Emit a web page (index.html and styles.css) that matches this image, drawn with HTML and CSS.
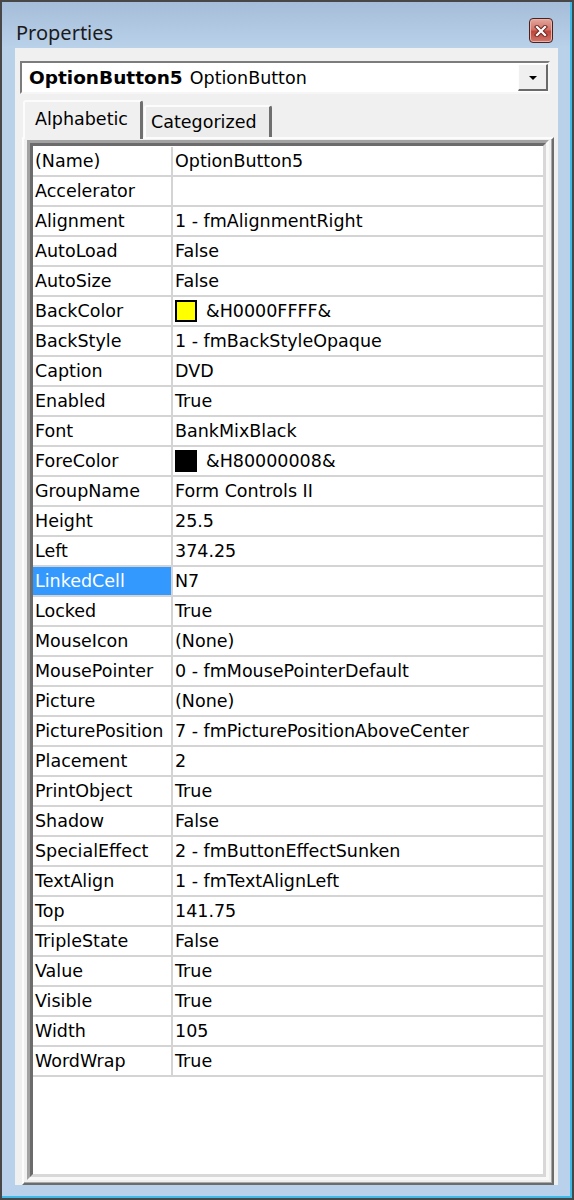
FILE: index.html
```html
<!DOCTYPE html>
<html>
<head>
<meta charset="utf-8">
<title>Properties</title>
<link rel="stylesheet" href="styles.css">
</head>
<body>
<div class="window">
  <div class="titlebar">
    <div class="title">Properties</div>
    <div class="close">
      <svg width="14" height="12" viewBox="0 0 14 12">
        <path d="M3 2 L11 10 M11 2 L3 10" stroke="#6a2a24" stroke-width="4.2" stroke-linecap="square" fill="none"/>
        <path d="M3 2 L11 10 M11 2 L3 10" stroke="#ffffff" stroke-width="2.2" stroke-linecap="square" fill="none"/>
      </svg>
    </div>
  </div>
  <div class="client">
    <div class="combo">
      <span class="combo-name">OptionButton5</span>
      <span class="combo-type">OptionButton</span>
      <span class="dd"><span class="tri"></span></span>
    </div>
    <div class="tabs">
      <div class="tab active">Alphabetic</div>
      <div class="tab">Categorized</div>
    </div>
    <div class="tabbody">
      <div class="grid-outer">
        <div class="grid-inner">
          <div class="row"><div class="name">(Name)</div><div class="val">OptionButton5</div></div>
          <div class="row"><div class="name">Accelerator</div><div class="val"></div></div>
          <div class="row"><div class="name">Alignment</div><div class="val">1 - fmAlignmentRight</div></div>
          <div class="row"><div class="name">AutoLoad</div><div class="val">False</div></div>
          <div class="row"><div class="name">AutoSize</div><div class="val">False</div></div>
          <div class="row"><div class="name">BackColor</div><div class="val"><span class="swatch yellow"></span>&amp;H0000FFFF&amp;</div></div>
          <div class="row"><div class="name">BackStyle</div><div class="val">1 - fmBackStyleOpaque</div></div>
          <div class="row"><div class="name">Caption</div><div class="val">DVD</div></div>
          <div class="row"><div class="name">Enabled</div><div class="val">True</div></div>
          <div class="row"><div class="name">Font</div><div class="val">BankMixBlack</div></div>
          <div class="row"><div class="name">ForeColor</div><div class="val"><span class="swatch black"></span>&amp;H80000008&amp;</div></div>
          <div class="row"><div class="name">GroupName</div><div class="val">Form Controls II</div></div>
          <div class="row"><div class="name">Height</div><div class="val">25.5</div></div>
          <div class="row"><div class="name">Left</div><div class="val">374.25</div></div>
          <div class="row"><div class="name selected">LinkedCell</div><div class="val">N7</div></div>
          <div class="row"><div class="name">Locked</div><div class="val">True</div></div>
          <div class="row"><div class="name">MouseIcon</div><div class="val">(None)</div></div>
          <div class="row"><div class="name">MousePointer</div><div class="val">0 - fmMousePointerDefault</div></div>
          <div class="row"><div class="name">Picture</div><div class="val">(None)</div></div>
          <div class="row"><div class="name">PicturePosition</div><div class="val">7 - fmPicturePositionAboveCenter</div></div>
          <div class="row"><div class="name">Placement</div><div class="val">2</div></div>
          <div class="row"><div class="name">PrintObject</div><div class="val">True</div></div>
          <div class="row"><div class="name">Shadow</div><div class="val">False</div></div>
          <div class="row"><div class="name">SpecialEffect</div><div class="val">2 - fmButtonEffectSunken</div></div>
          <div class="row"><div class="name">TextAlign</div><div class="val">1 - fmTextAlignLeft</div></div>
          <div class="row"><div class="name">Top</div><div class="val">141.75</div></div>
          <div class="row"><div class="name">TripleState</div><div class="val">False</div></div>
          <div class="row"><div class="name">Value</div><div class="val">True</div></div>
          <div class="row"><div class="name">Visible</div><div class="val">True</div></div>
          <div class="row"><div class="name">Width</div><div class="val">105</div></div>
          <div class="row"><div class="name">WordWrap</div><div class="val">True</div></div>
        </div>
      </div>
    </div>
  </div>
</div>
</body>
</html>
```

FILE: styles.css
```css
* { box-sizing: border-box; }
html, body { margin: 0; padding: 0; }
body {
  width: 574px;
  height: 1200px;
  font-family: "DejaVu Sans", sans-serif;
  font-size: 17.5px;
  color: #000;
}
.window {
  width: 574px;
  height: 1200px;
  border: 2px solid #474747;
  background: linear-gradient(#a6bdd9 0, #bad1ea 46px, #b9d1ea 100%);
  box-shadow: inset -2px -2px 0 #3cbbe9;
  padding: 0 14px 13px 13px;
  display: flex;
  flex-direction: column;
}
.titlebar {
  height: 46px;
  flex: none;
  display: flex;
  justify-content: space-between;
  align-items: flex-start;
}
.title {
  font-family: "Noto Sans", sans-serif;
  font-size: 20px;
  line-height: 27px;
  margin-top: 17px;
  margin-left: 1px;
  color: #1b1b1b;
}
.close {
  width: 24px;
  height: 25px;
  margin-top: 16px;
  margin-right: 5px;
  border: 1px solid #4a2320;
  border-radius: 4px;
  background: linear-gradient(#e4a79e 0, #d27468 45%, #c0453a 55%, #d0786c 100%);
  box-shadow: inset 0 0 0 1px #eab3aa;
  display: flex;
  align-items: center;
  justify-content: center;
}
.client {
  flex: 1;
  background: #f0f0f0;
  display: flex;
  flex-direction: column;
  padding: 13px 4px 0 5px;
}
.combo {
  height: 33px;
  flex: none;
  margin-right: 4px;
  background: #fff;
  border-style: solid;
  border-width: 2px;
  border-color: #7c7c7c #f6f6f6 #f6f6f6 #7c7c7c;
  display: flex;
  align-items: center;
  padding-left: 7px;
}
.combo-name { font-weight: bold; font-size: 18.5px; margin-right: 7px; }
.dd {
  margin-left: auto;
  width: 30px;
  height: 27px;
  border-style: solid;
  border-width: 1px 2px 2px 1px;
  border-color: #fdfdfd #6a6a6a #6a6a6a #fdfdfd;
  background: #f0f0f0;
  display: flex;
  align-items: center;
  justify-content: center;
  padding-top: 2px;
}
.tri {
  width: 0;
  height: 0;
  border-top: 4px solid #000;
  border-left: 4px solid transparent;
  border-right: 4px solid transparent;
}
.tabs {
  height: 37px;
  flex: none;
  margin-top: 6px;
  padding-left: 3px;
  display: flex;
  align-items: flex-end;
  position: relative;
  z-index: 1;
}
.tab {
  height: 32px;
  width: 128px;
  margin-left: 1px;
  background: #ececec;
  border-style: solid;
  border-width: 2px 3px 0 2px;
  border-color: #fcfcfc #6f6f6f #fcfcfc #fcfcfc;
  border-radius: 3px 3px 0 0;
  display: flex;
  align-items: center;
  padding-left: 5px;
}
.tab.active {
  height: 39px;
  width: 120px;
  margin-left: 0;
  margin-bottom: -2px;
  background: #f0f0f0;
  padding-left: 10px;
  padding-bottom: 3px;
}
.tabbody {
  flex: 1;
  margin-left: 2px;
  border-style: solid;
  border-width: 2px;
  border-color: #fcfcfc #6c6c6c #6c6c6c #fcfcfc;
  box-shadow: inset -1px -1px 0 #a8a8a8;
  padding: 1px 3px 3px 3px;
  display: flex;
}
.grid-outer {
  flex: 1;
  border-style: solid;
  border-width: 3px;
  border-color: #a2a2a2 #f8f8f8 #f8f8f8 #a2a2a2;
  display: flex;
}
.grid-inner {
  flex: 1;
  background: #fff;
  border-style: solid;
  border-width: 3px;
  border-color: #6b6b6b #d8d8d8 #d8d8d8 #6b6b6b;
  padding-top: 1px;
}
.row {
  height: 30px;
  display: flex;
  border-bottom: 2px solid #d4d4d4;
  line-height: 28px;
  white-space: nowrap;
}
.name {
  width: 140px;
  flex: none;
  border-right: 2px solid #d4d4d4;
  padding-left: 2px;
  overflow: hidden;
}
.name.selected {
  background: #3399ff;
  color: #fff;
}
.val {
  flex: 1;
  padding-left: 2px;
  display: flex;
  align-items: center;
}
.swatch {
  width: 22px;
  height: 22px;
  flex: none;
  border: 2px solid #000;
  margin-right: 9px;
}
.swatch.yellow { background: #ffff00; }
.swatch.black { background: #000; }
```
